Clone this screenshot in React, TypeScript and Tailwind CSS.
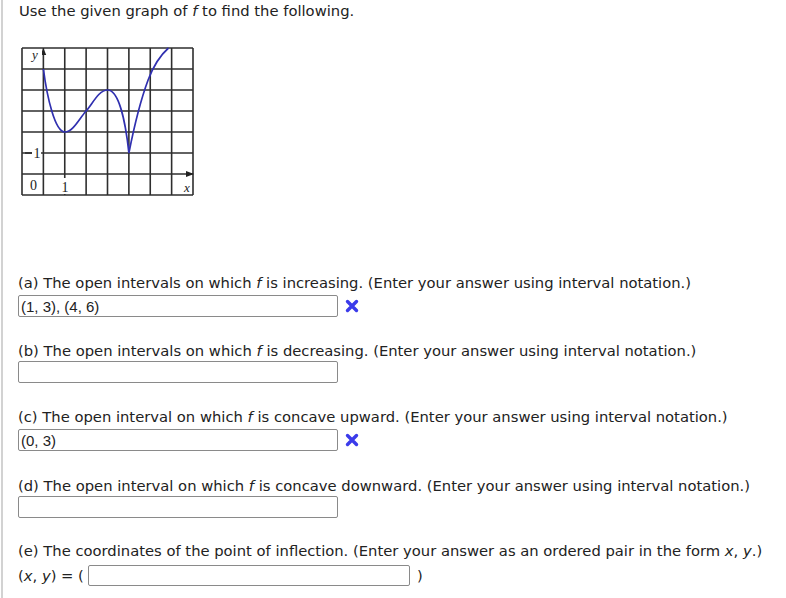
import React from "react";

const ux = 21.375;
const X0 = 22.4;

function Graph() {
  const vs = Array.from({ length: 9 }, (_, i) => 1 + i * ux);
  const hs = Array.from({ length: 8 }, (_, j) => 1 + j * 21);
  const serif = "'Liberation Serif', 'DejaVu Serif', serif";
  return (
    <svg width="176" height="152" viewBox="0 0 176 152" className="block">
      {vs.map((x, i) => (
        <line key={"v" + i} x1={x} y1={1} x2={x} y2={148} stroke="#2e2e2e" strokeWidth="1.6" />
      ))}
      {hs.map((y, i) => (
        <line key={"h" + i} x1={1} y1={y} x2={172} y2={y} stroke="#2e2e2e" strokeWidth="1.6" />
      ))}
      {/* axis arrows */}
      <polygon points={`${X0 - 2.8},8 ${X0},1 ${X0 + 2.8},8`} fill="#222" />
      <polygon points="165,124 173,127 165,130" fill="#222" />
      {/* labels */}
      <rect x="10" y="2.5" width="11" height="12" fill="white" />
      <text x="11" y="11.5" fontFamily={serif} fontStyle="italic" fontSize="13" fill="#222">y</text>
      <rect x="11" y="98" width="9" height="15" fill="white" />
      <text x="12.5" y="111" fontFamily={serif} fontSize="14" fill="#222">1</text>
      <line x1="4" y1="106" x2="11" y2="106" stroke="#2e2e2e" strokeWidth="1.6" />
      <text x="9" y="143" fontFamily={serif} fontSize="14" fill="#222">0</text>
      <rect x="40" y="131" width="9" height="16" fill="white" />
      <text x="40.5" y="145" fontFamily={serif} fontSize="14" fill="#222">1</text>
      <text x="163" y="145" fontFamily={serif} fontStyle="italic" fontSize="13" fill="#222">x</text>
      {/* curve */}
      <path
        d={`M${X0},22 C26,50 34,85 43.8,85 C52,85 58,72 65.1,64 C72,56 78,43 86.5,43 C97,43 104,70 107.9,106 Q117,60 127.1,33 Q135,12 147.5,1`}
        fill="none"
        stroke="#3030b0"
        strokeWidth="1.7"
      />
    </svg>
  );
}

function XMark() {
  return (
    <svg width="14" height="14" viewBox="0 0 14 14" className="block">
      <path d="M2.5,2.5 L11.5,11.5 M11.5,2.5 L2.5,11.5" stroke="#3b3bea" strokeWidth="3.4" strokeLinecap="round" />
    </svg>
  );
}

function Box({ value, wrong }: { value?: string; wrong?: boolean }) {
  return (
    <div className="flex items-center gap-[7px]">
      <div className="w-[320px] h-[22px] border border-[#8a8a8a] rounded-[2px] flex items-center pl-[2px] font-['Liberation_Sans'] text-[15px] text-[#222] leading-none">
        {value}
      </div>
      {wrong && <XMark />}
    </div>
  );
}

const F = () => <i>f</i>;

export default function App() {
  return (
    <div className="w-[786px] h-[598px] bg-white overflow-hidden font-['DejaVu_Sans'] text-[14.75px] leading-[18px] text-[#222]">
      <div className="ml-[1px] h-full border-l-2 border-[#d2d2d2] pl-[15px]">
        <div className="pt-[2px] pl-[1px]">
          Use the given graph of <F /> to find the following.
        </div>
        <div className="mt-[27px] ml-[3px]">
          <Graph />
        </div>
        <div className="mt-[75px]">
          (a) The open intervals on which <F /> is increasing. (Enter your answer using interval notation.)
        </div>
        <div className="mt-[3px]">
          <Box value="(1, 3), (4, 6)" wrong />
        </div>
        <div className="mt-[25px]">
          (b) The open intervals on which <F /> is decreasing. (Enter your answer using interval notation.)
        </div>
        <div className="mt-[1px]">
          <Box />
        </div>
        <div className="mt-[25px]">
          (c) The open interval on which <F /> is concave upward. (Enter your answer using interval notation.)
        </div>
        <div className="mt-[3px]">
          <Box value="(0, 3)" wrong />
        </div>
        <div className="mt-[26px]">
          (d) The open interval on which <F /> is concave downward. (Enter your answer using interval notation.)
        </div>
        <div className="mt-[1px]">
          <Box />
        </div>
        <div className="mt-[24px]">
          (e) The coordinates of the point of inflection. (Enter your answer as an ordered pair in the form <i>x</i>, <i>y</i>.)
        </div>
        <div className="mt-[5px] flex items-center">
          <span>
            (<i>x</i>, <i>y</i>) = (
          </span>
          <div className="ml-[4px] w-[322px] h-[21px] border border-[#8a8a8a] rounded-[2px]" />
          <span className="ml-[7px]">)</span>
        </div>
      </div>
    </div>
  );
}
